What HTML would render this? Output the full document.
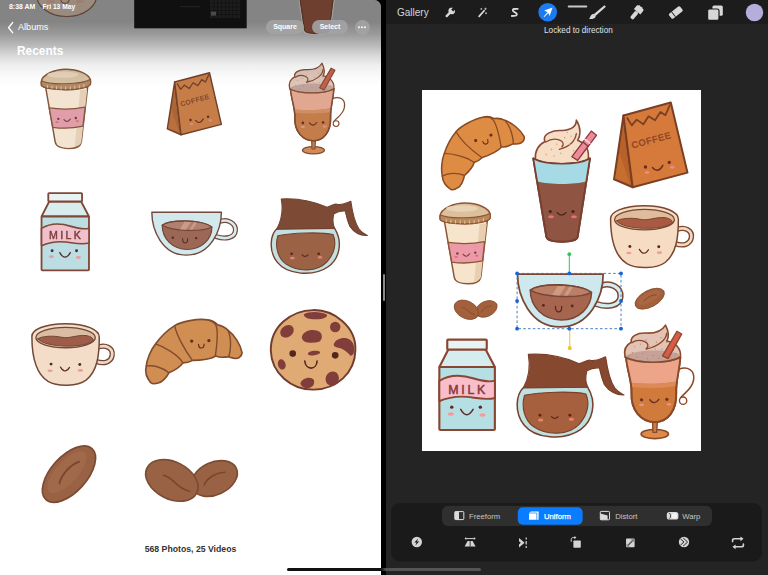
<!DOCTYPE html>
<html><head><meta charset="utf-8">
<style>
html,body{margin:0;padding:0;background:#000;}
body{width:768px;height:575px;overflow:hidden;position:relative;font-family:"Liberation Sans",sans-serif;}
#left{position:absolute;left:0;top:0;width:381px;height:575px;background:#fff;border-top-right-radius:7px;overflow:hidden;}
#grad{position:absolute;left:0;top:0;width:381px;height:100px;background:linear-gradient(to bottom,rgba(0,0,0,.482) 0px,rgba(0,0,0,.482) 22px,rgba(0,0,0,.395) 34px,rgba(0,0,0,.265) 46px,rgba(0,0,0,.145) 56px,rgba(0,0,0,.058) 66px,rgba(0,0,0,.014) 78px,rgba(0,0,0,0) 88px);}
#right{position:absolute;left:386px;top:0;width:382px;height:575px;background:#242424;overflow:hidden;}
.t{position:absolute;white-space:nowrap;color:#fff;}
.pill{position:absolute;height:14px;border-radius:7px;background:rgba(163,163,163,0.9);color:#fff;font-weight:bold;font-size:7px;line-height:14px;text-align:center;}
svg{position:absolute;left:0;top:0;}
#lsvg{filter:saturate(0.82);}
#homebar{position:absolute;left:287px;top:568.3px;width:194px;height:2.5px;border-radius:2px;background:linear-gradient(to right,#111 0,#111 94px,#555 99px,#555 100%);}
#divh{position:absolute;left:382.5px;top:274px;width:2.5px;height:27px;border-radius:2px;background:#8a8a8a;}

</style></head><body>
<div id="left">
<svg id="lsvg" width="381" height="575" viewBox="0 0 381 575"><defs><g id="cup" transform="translate(20,55) scale(0.18248)" stroke-linejoin="round" stroke-linecap="round">
<path d="M140,175 L193,478 C198,504 235,513 265,513 C295,513 330,504 336,478 L371,175 Z" fill="#f6e4cc" stroke="#8c5535" stroke-width="8"/>
<path d="M330,190 L300,500 C320,498 333,490 336,478 L368,190 Z" fill="#e8cfb0" stroke="none"/>
<path d="M160,290 Q258,304 357,286 L345,390 Q262,408 180,396 Z" fill="#ec9aa8" stroke="#8c5535" stroke-width="7"/>
<path d="M116,150 C118,105 195,78 250,78 C312,78 384,102 387,143 L386,160 C380,178 305,190 250,190 C195,190 124,182 117,166 Z" fill="#dcc09c" stroke="#8c5535" stroke-width="8"/>
<path d="M117,141 C160,165 340,163 387,133 L386,160 C380,178 305,190 250,190 C195,190 124,182 117,166 Z" fill="#b9895c" stroke="#8c5535" stroke-width="6"/>
<path d="M150,166 V178 M175,170 V182 M200,173 V185 M225,174 V186 M250,175 V187 M275,174 V186 M300,172 V184 M325,168 V180 M350,162 V174" stroke="#e3c096" stroke-width="6" fill="none"/>
<ellipse cx="235" cy="108" rx="85" ry="17" fill="#e8d3b4" stroke="none"/>
<circle cx="210" cy="350" r="6.5" fill="#7a3a3a"/><circle cx="306" cy="345" r="6.5" fill="#7a3a3a"/>
<path d="M241,354 Q258,376 276,351" fill="none" stroke="#7a3a3a" stroke-width="6"/>
<ellipse cx="203" cy="368" rx="9" ry="5" fill="#e06a7a"/><ellipse cx="314" cy="362" rx="9" ry="5" fill="#e06a7a"/>
</g>
<g id="bag" transform="translate(150,55) scale(0.18248)" stroke-linejoin="round" stroke-linecap="round">
<path d="M135,148 L95,405 L170,437 Z" fill="#b8622a" stroke="#7a3f22" stroke-width="8"/>
<path d="M135,148 L326,97 L391,380 L170,437 Z" fill="#d57a3a" stroke="#7a3f22" stroke-width="8"/>
<path d="M118,300 L100,400 L160,425 Z" fill="#c66d30" stroke="none"/>
<path d="M150,158 L168,188 L188,165 L215,184 L236,152 L262,168 L284,135 L304,148 L322,108" fill="none" stroke="#7a3f22" stroke-width="7"/>
<text x="250" y="260" transform="rotate(-15 250 260)" text-anchor="middle" font-family="Liberation Sans, sans-serif" font-size="36" fill="#8a4424" stroke="#8a4424" stroke-width="1.5" letter-spacing="3">COFFEE</text>
<circle cx="222" cy="356" r="7" fill="#6a2f20"/><circle cx="318" cy="338" r="7" fill="#6a2f20"/>
<path d="M250,358 Q272,385 292,350" fill="none" stroke="#6a2f20" stroke-width="6"/>
<ellipse cx="228" cy="378" rx="10" ry="6" fill="#f08a80"/><ellipse cx="330" cy="358" rx="10" ry="6" fill="#f08a80"/>
</g>
<g id="latte" transform="translate(270,55) scale(0.18248)" stroke-linejoin="round" stroke-linecap="round">
<path d="M343,238 C380,225 415,240 408,285 C402,325 370,340 352,362" fill="none" stroke="#8a4a2a" stroke-width="7"/>
<circle cx="362" cy="376" r="16" fill="none" stroke="#8a4a2a" stroke-width="6"/>
<ellipse cx="238" cy="522" rx="60" ry="20" fill="#e08a4a" stroke="#8a4a2a" stroke-width="7"/>
<path d="M228,460 L230,515 L246,515 L250,460 Z" fill="#d07a3c" stroke="#8a4a2a" stroke-width="6"/>
<path d="M112,185 C118,250 138,290 136,340 C132,420 180,470 238,470 C295,470 335,420 332,340 C330,290 345,250 350,185 Z" fill="#d07a3c" stroke="#8a4a2a" stroke-width="8"/>
<path d="M114,195 C120,250 132,275 135,298 C200,305 270,303 333,292 C338,260 345,230 349,195 Z" fill="#eda58a" stroke="none"/>
<path d="M135,298 C200,305 270,303 333,292 L333,312 C270,322 200,322 136,316 Z" fill="#dd8a58" stroke="none"/>
<path d="M112,185 C118,250 138,290 136,340 C132,420 180,470 238,470 C295,470 335,420 332,340 C330,290 345,250 350,185" fill="none" stroke="#8a4a2a" stroke-width="8"/>
<path d="M108,185 C100,150 115,130 135,120 C130,95 160,78 200,80 C240,82 270,70 285,45 C300,75 300,100 290,115 C330,120 355,150 350,185 C300,215 160,215 108,185 Z" fill="#e2c4b6" stroke="#8a4a2a" stroke-width="7"/>
<path d="M110,180 C160,150 300,150 348,175 C345,195 300,212 230,212 C160,212 115,200 110,180 Z" fill="#c6a198" stroke="none"/>
<g fill="#b87a5a"><circle cx="140" cy="165" r="2.6"/><circle cx="160" cy="185" r="2.6"/><circle cx="185" cy="170" r="2.6"/><circle cx="205" cy="192" r="2.6"/><circle cx="230" cy="178" r="2.6"/><circle cx="255" cy="190" r="2.6"/><circle cx="280" cy="175" r="2.6"/><circle cx="310" cy="188" r="2.6"/><circle cx="330" cy="170" r="2.6"/><circle cx="150" cy="140" r="2.6"/><circle cx="175" cy="128" r="2.6"/><circle cx="215" cy="140" r="2.6"/><circle cx="245" cy="120" r="2.6"/><circle cx="265" cy="100" r="2.6"/><circle cx="300" cy="140" r="2.6"/><circle cx="320" cy="155" r="2.6"/><circle cx="200" cy="110" r="2.6"/><circle cx="240" cy="150" r="2.6"/><circle cx="270" cy="150" r="2.6"/><circle cx="125" cy="180" r="2.6"/><circle cx="290" cy="120" r="2.6"/><circle cx="180" cy="200" r="2.6"/><circle cx="300" cy="200" r="2.6"/></g><path d="M138,122 C170,100 230,120 200,150 C250,140 290,110 290,80" fill="none" stroke="#8a4a2a" stroke-width="6"/>
<path d="M272,180 L335,72 L356,84 L296,192 Z" fill="#d85a48" stroke="#8a4a2a" stroke-width="6"/>
<path d="M108,185 C160,215 300,215 350,185" fill="none" stroke="#8a4a2a" stroke-width="7"/>
<circle cx="180" cy="372" r="7" fill="#6a2f20"/><circle cx="291" cy="370" r="7" fill="#6a2f20"/>
<path d="M216,372 Q236,398 256,370" fill="none" stroke="#6a2f20" stroke-width="6"/>
<ellipse cx="180" cy="394" rx="11" ry="6" fill="#f0907a"/><ellipse cx="300" cy="392" rx="11" ry="6" fill="#f0907a"/>
</g>
<g id="milk" transform="translate(20,180) scale(0.18248)" stroke-linejoin="round" stroke-linecap="round">
<path d="M160,118 L335,118 L378,200 L118,200 Z" fill="#d6edef" stroke="#8a4632" stroke-width="10"/>
<rect x="155" y="72" width="185" height="46" rx="4" fill="#e6f4f5" stroke="#8a4632" stroke-width="10"/>
<rect x="118" y="200" width="260" height="295" rx="5" fill="#b6dfe3" stroke="#8a4632" stroke-width="10"/>
<path d="M118,265 C170,232 230,238 280,254 C320,266 350,272 378,264 L378,345 C340,356 300,346 250,340 C190,334 150,346 118,360 Z" fill="#f8bfcb" stroke="#8a4632" stroke-width="9"/>
<text x="253" y="326" text-anchor="middle" font-family="Liberation Sans, sans-serif" font-size="58" fill="#8a3a3a" stroke="#8a3a3a" stroke-width="2.4" letter-spacing="13">MILK</text>
<circle cx="176" cy="388" r="8" fill="#5a2a2a"/><circle cx="310" cy="388" r="8" fill="#5a2a2a"/>
<path d="M218,398 Q246,448 276,398" fill="none" stroke="#5a2a2a" stroke-width="7"/>
<ellipse cx="172" cy="420" rx="14" ry="8" fill="#f59aa0"/><ellipse cx="320" cy="425" rx="14" ry="8" fill="#f59aa0"/>
</g>
<g id="teacup" transform="translate(140,190) scale(0.14793)" stroke-linejoin="round" stroke-linecap="round">
<path d="M535,215 C590,190 650,225 645,275 C640,325 575,335 515,315" fill="none" stroke="#7a4635" stroke-width="34"/>
<path d="M535,215 C590,190 650,225 645,275 C640,325 575,335 515,315" fill="none" stroke="#d3ecf0" stroke-width="18"/>
<path d="M80,150 L550,150 C550,270 480,440 312,440 C150,440 80,270 80,150 Z" fill="#cde9ee" stroke="#7a4635" stroke-width="9.5"/>
<path d="M150,238 C150,330 220,402 320,402 C420,402 486,330 486,250 C400,200 220,195 150,238 Z" fill="#a5654f" stroke="#7a4635" stroke-width="8"/>
<path d="M150,238 C200,200 420,200 486,250 C420,285 220,280 150,238 Z" fill="#bb7e66" stroke="#7a4635" stroke-width="8"/>
<path d="M300,215 L270,265 L310,268 L345,216 Z M365,218 L335,268 L355,268 L385,222 Z" fill="#cf9a84" stroke="none"/>
<circle cx="222" cy="322" r="8" fill="#5a2a22"/><circle cx="380" cy="325" r="8" fill="#5a2a22"/>
<path d="M288,328 C288,368 326,368 322,328" fill="none" stroke="#5a2a22" stroke-width="7"/>
</g>
<g id="pot" transform="translate(260,185) scale(0.17397)" stroke-linejoin="round" stroke-linecap="round">
<path d="M98,250 C55,290 50,385 100,445 C155,515 305,530 392,470 C455,425 480,330 428,248 Z" fill="#bfe0e0" stroke="#7a3f2a" stroke-width="8"/>
<path d="M102,292 C85,350 100,420 150,455 C220,502 330,500 385,442 C432,390 440,330 420,285 C350,268 180,275 102,292 Z" fill="#a6603e" stroke="#7a3f2a" stroke-width="6"/>
<path d="M122,80 C200,75 300,90 385,128 C410,120 430,108 440,110 C470,120 500,100 522,93 C530,150 545,220 570,255 C590,280 610,285 617,290 C580,292 540,272 515,235 C500,200 495,170 490,150 C470,148 450,150 425,165 C415,200 420,230 430,250 L96,254 C125,200 135,150 122,80 Z" fill="#86482e" stroke="#7a3f2a" stroke-width="6"/>
<circle cx="182" cy="395" r="7.5" fill="#5a2418"/><circle cx="337" cy="395" r="7.5" fill="#5a2418"/>
<path d="M242,402 Q258,420 276,402" fill="none" stroke="#5a2418" stroke-width="6"/>
<ellipse cx="186" cy="420" rx="14" ry="8" fill="#ee8068"/><ellipse cx="345" cy="416" rx="14" ry="8" fill="#ee8068"/>
</g>
<g id="mug" transform="translate(20,305) scale(0.16515)" stroke-linejoin="round" stroke-linecap="round">
<path d="M465,258 C520,235 565,262 558,305 C552,345 510,358 462,342" fill="none" stroke="#7a4630" stroke-width="32"/>
<path d="M465,258 C520,235 565,262 558,305 C552,345 510,358 462,342" fill="none" stroke="#f5d8c0" stroke-width="16"/>
<path d="M72,190 C72,150 150,113 275,113 C400,113 480,150 480,195 C480,300 470,400 400,455 C350,492 230,497 170,462 C90,412 72,290 72,190 Z" fill="#f7dcc4" stroke="#7a4630" stroke-width="9"/>
<ellipse cx="276" cy="197" rx="180" ry="62" fill="#dfbc9c" stroke="#7a4630" stroke-width="8"/>
<path d="M108,205 C130,188 200,184 250,195 C300,206 340,180 400,185 C432,190 448,205 442,216 C400,262 150,262 108,205 Z" fill="#a85a42" stroke="#7a4630" stroke-width="6"/>
<circle cx="188" cy="358" r="9" fill="#5a2a22"/><circle cx="362" cy="360" r="9" fill="#5a2a22"/>
<path d="M245,376 Q272,422 300,378" fill="none" stroke="#5a2a22" stroke-width="7"/>
<ellipse cx="182" cy="398" rx="16" ry="8" fill="#f39a92"/><ellipse cx="366" cy="396" rx="16" ry="8" fill="#f39a92"/>
</g>
<g id="croissant" transform="translate(135,305) scale(0.16529)" stroke-linejoin="round" stroke-linecap="round">
<path d="M95,470 C70,440 60,400 68,370 C72,330 95,270 125,235 C150,200 200,150 240,125 C280,100 380,80 440,90 C470,92 490,110 500,120 C530,125 550,140 562,152 C600,180 640,240 648,290 C645,315 620,328 600,322 C590,320 575,318 568,312 C540,318 510,318 488,308 C470,325 400,335 350,335 C330,345 300,350 290,350 C270,380 240,395 205,410 C190,440 160,470 140,472 C120,478 105,478 95,470 Z" fill="#de8c44" stroke="#8a4a25" stroke-width="10"/>
<path d="M240,125 C250,180 300,270 345,332 M440,90 C480,100 495,115 497,160 C500,220 490,280 486,308 M562,152 C585,200 580,270 568,312 M125,235 C170,250 260,300 290,350 M68,370 C110,360 170,380 205,410" fill="none" stroke="#8a4a25" stroke-width="8.5"/>
<circle cx="343" cy="218" r="10" fill="#6a2f18"/><circle cx="447" cy="215" r="10" fill="#6a2f18"/>
<path d="M384,238 C386,268 418,268 418,236" fill="none" stroke="#6a2f18" stroke-width="7"/>
</g>
<g id="cookie" transform="translate(260,300) scale(0.17406)" stroke-linejoin="round" stroke-linecap="round">
<path d="M305,58 C420,55 555,150 548,290 C545,420 440,512 310,515 C180,518 65,420 62,290 C60,150 180,60 305,58 Z" fill="#eaa868" stroke="#7a3a28" stroke-width="11"/>
<g fill="#8c3a36" stroke="none">
<path d="M252,82 C280,65 350,65 385,85 C390,105 340,115 310,110 C280,112 250,100 252,82 Z"/>
<ellipse cx="155" cy="180" rx="42" ry="33" transform="rotate(-35 155 180)"/>
<path d="M240,215 C245,180 290,165 325,175 C360,180 365,225 340,240 C300,250 245,250 240,215 Z"/>
<circle cx="432" cy="155" r="30"/>
<path d="M425,250 C440,215 510,200 535,250 C548,290 540,320 520,320 C500,300 480,280 450,275 C430,270 420,262 425,250 Z"/>
<ellipse cx="310" cy="305" rx="36" ry="13" transform="rotate(-8 310 305)"/>
<ellipse cx="125" cy="370" rx="22" ry="30" transform="rotate(-15 125 370)"/>
<path d="M232,480 C240,450 290,435 310,460 C315,490 300,505 270,508 C250,505 235,495 232,480 Z"/>
<ellipse cx="415" cy="452" rx="38" ry="42" transform="rotate(20 415 452)"/>
</g>
<circle cx="188" cy="308" r="19" fill="#5a241c"/><circle cx="432" cy="318" r="19" fill="#5a241c"/>
<path d="M257,350 C262,405 325,405 328,350" fill="none" stroke="#5a241c" stroke-width="9"/>
</g>
<g id="bean" transform="translate(20,430) scale(0.15649)" stroke-linejoin="round" stroke-linecap="round">
<ellipse cx="313" cy="282" rx="220" ry="114" transform="rotate(-48 313 282)" fill="#a3603c" stroke="#84492c" stroke-width="11"/>
<ellipse cx="300" cy="270" rx="170" ry="70" transform="rotate(-48 300 270)" fill="#aa6741" stroke="none"/>
<path d="M252,342 C262,290 320,222 378,202" fill="none" stroke="#7e4429" stroke-width="11"/>
</g>
<g id="beans2" transform="translate(135,440) scale(0.14975)" stroke-linejoin="round" stroke-linecap="round">
<ellipse cx="530" cy="257" rx="162" ry="108" transform="rotate(-25 530 257)" fill="#a3603c" stroke="#84492c" stroke-width="11"/>
<path d="M462,300 C482,250 548,215 600,215" fill="none" stroke="#7e4429" stroke-width="10"/>
<ellipse cx="246" cy="270" rx="186" ry="124" transform="rotate(27 246 270)" fill="#a3603c" stroke="#84492c" stroke-width="11"/>
<path d="M190,235 C260,250 270,320 365,343" fill="none" stroke="#7e4429" stroke-width="10"/>
</g>
<g id="frappe" transform="translate(515,105) scale(0.2611)" stroke-linejoin="round" stroke-linecap="round">
<path d="M218,198 L292,100 L312,116 L240,212 Z" fill="#ee8a9a" stroke="#8a3a3a" stroke-width="5"/>
<path d="M232,180 L250,195 M250,156 L268,170 M268,132 L286,146" stroke="#fbd0d6" stroke-width="7" fill="none"/>
<path d="M78,210 C75,170 95,150 115,140 C100,110 150,95 180,98 C215,95 235,80 235,58 C255,90 250,120 240,135 C275,150 285,180 280,210 C240,238 120,238 78,210 Z" fill="#f6ddc6" stroke="#8a4a35" stroke-width="6"/>
<path d="M118,142 C150,120 200,135 180,160 M235,110 C230,140 210,160 170,170" fill="none" stroke="#8a4a35" stroke-width="5"/>
<g fill="#e0a070"><circle cx="140" cy="170" r="3"/><circle cx="160" cy="150" r="3"/><circle cx="190" cy="125" r="3"/><circle cx="210" cy="150" r="3"/><circle cx="225" cy="175" r="3"/><circle cx="175" cy="185" r="3"/><circle cx="120" cy="190" r="3"/><circle cx="200" cy="105" r="3"/><circle cx="245" cy="190" r="3"/><circle cx="150" cy="195" r="3"/><circle cx="215" cy="120" r="3"/></g>
<path d="M218,198 L260,142 L280,158 L240,212 Z" fill="#ee8a9a" stroke="#8a3a3a" stroke-width="5"/>
<path d="M70,205 L120,505 C125,530 235,530 240,505 L287,205 C240,232 120,232 70,205 Z" fill="#8f5442" stroke="#7a3f2e" stroke-width="7"/>
<path d="M71,206 C120,232 240,232 286,206 L273,292 C230,306 130,306 85,292 Z" fill="#a6dbe6" stroke="none"/>
<path d="M70,205 L120,505 C125,530 235,530 240,505 L287,205" fill="none" stroke="#7a3f2e" stroke-width="7"/>
<path d="M70,205 C120,232 240,232 287,205" fill="none" stroke="#7a3f2e" stroke-width="6"/>
<circle cx="135" cy="408" r="6" fill="#4a2018"/><circle cx="222" cy="408" r="6" fill="#4a2018"/>
<path d="M162,412 Q178,432 195,412" fill="none" stroke="#4a2018" stroke-width="5"/>
<ellipse cx="138" cy="428" rx="11" ry="6" fill="#e8707a"/><ellipse cx="226" cy="428" rx="11" ry="6" fill="#e8707a"/>
</g>
</defs><use href="#cup"/><use href="#bag"/><use href="#latte"/><use href="#milk"/><use href="#teacup"/><use href="#pot"/><use href="#mug"/><use href="#croissant"/><use href="#cookie"/><use href="#bean"/><use href="#beans2"/></svg>
<div id="grad"></div>
<svg width="381" height="40" viewBox="0 0 381 40">
<ellipse cx="66.7" cy="-5" rx="30" ry="21.5" fill="#9b8b7d" stroke="#5c4538" stroke-width="1.2"/>
<ellipse cx="65" cy="0" rx="4" ry="3.4" fill="none" stroke="#6a4840" stroke-width="1.3"/>
<ellipse cx="51" cy="1.5" rx="4" ry="1.3" fill="#a07a70"/><ellipse cx="80" cy="1.5" rx="4" ry="1.3" fill="#a07a70"/>
<rect x="134.2" y="-2" width="112.5" height="30.3" fill="#101010"/>
<rect x="210" y="-2" width="30" height="20" fill="#1d1d1d"/>
<rect x="213.75" y="-2" width="0.6" height="20" fill="#101010"/><rect x="217.50" y="-2" width="0.6" height="20" fill="#101010"/><rect x="221.25" y="-2" width="0.6" height="20" fill="#101010"/><rect x="225.00" y="-2" width="0.6" height="20" fill="#101010"/><rect x="228.75" y="-2" width="0.6" height="20" fill="#101010"/><rect x="232.50" y="-2" width="0.6" height="20" fill="#101010"/><rect x="236.25" y="-2" width="0.6" height="20" fill="#101010"/><rect x="210" y="2.75" width="30" height="0.6" fill="#101010"/><rect x="210" y="6.50" width="30" height="0.6" fill="#101010"/><rect x="210" y="10.25" width="30" height="0.6" fill="#101010"/><rect x="210" y="14.00" width="30" height="0.6" fill="#101010"/><rect x="211" y="11.6" width="5" height="4" fill="#4a4a4a"/>
<rect x="180" y="6.2" width="20" height="1" fill="#262626"/>
<path d="M298.4,-2 L303.2,31.5 C303.8,36.4 330,36.4 330.6,31.5 L335,-2 Z" fill="#a9a4a2" stroke="none"/>
<path d="M299.8,-2 L304.6,30.6 C305,34.6 328.6,34.6 329.2,30.6 L333.4,-2 Z" fill="#6e3e2e" stroke="#4e281c" stroke-width="1"/>
</svg>
<div class="t" style="left:9px;top:3.4px;font-size:6.9px;font-weight:bold;">8:38 AM</div>
<div class="t" style="left:42.5px;top:3.4px;font-size:6.7px;font-weight:bold;">Fri 13 May</div>
<svg width="20" height="20" style="left:5px;top:18px"><path d="M7.6,4.6 L3.6,9.6 L7.6,14.6" fill="none" stroke="#fff" stroke-width="1.5" stroke-linecap="round" stroke-linejoin="round"/></svg>
<div class="t" style="left:18px;top:22.3px;font-size:9.1px;">Albums</div>
<div class="t" style="left:17px;top:43.5px;font-size:11.9px;font-weight:bold;">Recents</div>
<div class="pill" style="left:266px;top:20px;width:38px;">Square</div>
<div class="pill" style="left:312px;top:20px;width:36px;">Select</div>
<div class="pill" style="left:354.5px;top:19.5px;width:15px;height:15px;border-radius:8px;"></div>
<svg width="20" height="20" style="left:352px;top:17px"><circle cx="7" cy="10.2" r="0.95" fill="#fff"/><circle cx="10" cy="10.2" r="0.95" fill="#fff"/><circle cx="13" cy="10.2" r="0.95" fill="#fff"/></svg>
<div class="t" style="left:0;width:381px;text-align:center;top:543.6px;font-size:8.7px;font-weight:bold;color:#333;">568 Photos, 25 Videos</div>

</div>
<div id="right">
<svg id="rsvg" width="382" height="575" viewBox="386 0 382 575">
<rect x="422" y="90" width="279" height="361" fill="#fff"/>
<use href="#cup" transform="translate(464.800,243.300) rotate(0) scale(1.0177) translate(-65.600,-108.800)"/><use href="#bag" transform="matrix(1.3616,-0.0106,0.0106,1.3616,384.794,5.706)"/><use href="#croissant" transform="matrix(0.8938,-0.2884,0.2884,0.8938,206.012,-108.998)"/><use href="#mug" transform="translate(651.400,236.750) rotate(0) scale(1.0059) translate(-72.450,-354.550)"/><use href="#beans2" transform="translate(475.850,309.800) rotate(0) scale(0.4681) translate(-191.900,-480.450)"/><use href="#bean" transform="translate(649.8,298.5) rotate(20) scale(0.465) translate(-69,-473.8)"/><use href="#milk" transform="translate(467.100,384.800) rotate(0) scale(1.1703) translate(-65.250,-231.700)"/><use href="#pot" transform="translate(570.450,395.900) rotate(0) scale(1.1105) translate(-319.150,-236.300)"/><use href="#latte" transform="translate(659.750,382.200) rotate(0) scale(1.2515) translate(-317.400,-108.850)"/><use href="#teacup" transform="translate(569.900,300.500) rotate(0) scale(1.2322) translate(-194.350,-233.650)"/><use href="#frappe"/>
<!-- selection box -->
<g fill="none">
<line x1="569.3" y1="255" x2="569.3" y2="273.4" stroke="#2fc457" stroke-width="1"/>
<line x1="569.8" y1="328.7" x2="569.8" y2="347" stroke="#f2c230" stroke-width="1"/>
<rect x="517.1" y="273.4" width="103.9" height="55.3" stroke="#3a6fb8" stroke-width="0.9" stroke-dasharray="2.6 2.2"/>
</g>
<g fill="#1565d8">
<circle cx="517.1" cy="273.4" r="1.9"/><circle cx="569.3" cy="273.4" r="1.9"/><circle cx="621" cy="273.4" r="1.9"/>
<circle cx="517.1" cy="301" r="1.9"/><circle cx="621" cy="301" r="1.9"/>
<circle cx="517.1" cy="328.7" r="1.9"/><circle cx="569.3" cy="328.7" r="1.9"/><circle cx="621" cy="328.7" r="1.9"/>
</g>
<circle cx="569.3" cy="254.2" r="1.9" fill="#2fc457"/>
<rect x="568" y="346.3" width="3.6" height="3.6" rx="0.8" fill="#f2c230"/>
<!-- top toolbar -->
<rect x="386" y="0" width="382" height="23.7" fill="#1c1c1c"/>
<text x="397" y="16" font-family="Liberation Sans, sans-serif" font-size="10" fill="#d6d6d6">Gallery</text>
<text x="578.4" y="32.6" text-anchor="middle" font-family="Liberation Sans, sans-serif" font-size="8.2" fill="#e0e0e0">Locked to direction</text>
<!-- wrench -->
<g transform="translate(450,12.7) rotate(45) scale(0.9)" fill="#d8d8d8">
<rect x="-1.3" y="-2" width="2.6" height="8.5" rx="1.2"/>
<path d="M-3.6,-3.5 A3.8,3.8 0 1 0 3.6,-3.5 L1.6,-5.8 L1.6,-3 L-1.6,-3 L-1.6,-5.8 Z" transform="translate(0,-0.5)"/>
</g>
<!-- wand -->
<g transform="translate(482.5,12.5) scale(0.8)" stroke="#d8d8d8" stroke-linecap="round" fill="none">
<line x1="-4.2" y1="4.8" x2="2" y2="-2.2" stroke-width="2.2"/>
<path d="M3.8,-5.6 L3.8,-3.6 M2.8,-4.6 L4.8,-4.6 M-1.5,-5 L-1.5,-3.8 M-2.1,-4.4 L-0.9,-4.4 M4.4,0.2 L4.4,1.6 M3.7,0.9 L5.1,0.9" stroke-width="0.9"/>
</g>
<!-- S -->
<path transform="translate(515,12.4) scale(0.78) translate(-515,-12.2)" d="M518.5,7.6 L513.6,7.8 C512.2,8 511.8,9.6 512.8,10.6 L516.6,13.2 C517.8,14.2 517.4,16.2 515.8,16.4 L511,16.8" fill="none" stroke="#d8d8d8" stroke-width="2.4" stroke-linecap="round" stroke-linejoin="round"/>
<!-- arrow active -->
<circle cx="547.7" cy="12.2" r="9.3" fill="#1d7bf2"/>
<path d="M552.6,7.4 L544.2,10.6 L547.5,12.3 L543.6,16.4 L544.3,17 L548.3,13 L549.6,16 Z" fill="#fff"/>
<!-- line + brush -->
<rect x="567.7" y="5.4" width="19.6" height="2" rx="1" fill="#c8c8c8"/>
<path d="M604.4,5.2 L605.9,6.7 L595.2,16.2 L593.4,14.4 Z" fill="#d8d8d8"/>
<path d="M593.2,13.8 L595.8,16.4 C594.6,19 591,19.4 589,18.8 C590.6,17.6 590.4,14.6 593.2,13.8 Z" fill="#d8d8d8"/>
<!-- smudge -->
<g transform="translate(636.5,12.5) rotate(40)" fill="#d8d8d8">
<rect x="-2" y="-1" width="4" height="9" rx="1.5"/>
<path d="M-4.2,-1 L4.2,-1 L4.2,-5 C4.2,-6.5 3,-7.5 2.2,-6.8 C1.4,-8 0,-8 -0.6,-7 C-1.6,-8 -3,-7.6 -3.2,-6.4 C-4,-6.4 -4.4,-5.6 -4.2,-4.6 Z"/>
</g>
<!-- eraser -->
<g transform="translate(675.8,12.5) rotate(-38)" fill="#d8d8d8">
<rect x="-7" y="-3.2" width="14" height="6.4" rx="1.4"/>
<rect x="-3.4" y="-3.2" width="0.9" height="6.4" fill="#1c1c1c"/>
</g>
<!-- layers -->
<rect x="712.4" y="5.4" width="10.4" height="10.4" rx="1.6" fill="#d8d8d8"/>
<rect x="707.6" y="9" width="11.4" height="11.4" rx="1.8" fill="#d8d8d8" stroke="#1c1c1c" stroke-width="1.2"/>
<circle cx="754.5" cy="12.5" r="8.7" fill="#b5aeda"/>
<!-- bottom panel -->
<rect x="391" y="503" width="371" height="58.5" rx="9" fill="#1a1a1a"/>
<rect x="442" y="505.8" width="270" height="20.2" rx="6" fill="#2f2f2f"/>
<rect x="517.8" y="507.2" width="64.8" height="17.6" rx="5" fill="#0a7cff"/>
<g font-family="Liberation Sans, sans-serif" font-size="7.7" fill="#c6c6c6">
<text x="469" y="518.6">Freeform</text>
<text x="544" y="518.6" fill="#fff" stroke="#fff" stroke-width="0.25">Uniform</text>
<text x="615.2" y="518.6">Distort</text>
<text x="682.3" y="518.6">Warp</text>
</g>
<!-- seg icons -->
<g>
<rect x="454.8" y="511.6" width="9" height="8" rx="0.8" fill="none" stroke="#dcdcdc" stroke-width="1"/>
<rect x="454.8" y="511.6" width="4.2" height="8" fill="#dcdcdc"/>
<path d="M529,513 L531,511.4 L538.6,511.4 L538.6,519.8 L529,519.8 Z" fill="#fff"/>
<path d="M529,513 L536.8,513 L536.8,519.8" fill="none" stroke="#0a7cff" stroke-width="0.7"/>
<rect x="600.3" y="511.4" width="9.2" height="8.4" rx="0.8" fill="none" stroke="#dcdcdc" stroke-width="1"/>
<path d="M600.3,513.4 L607.6,515.4 L607.6,519.8 L600.3,519.8 Z" fill="#dcdcdc"/>
<rect x="666.8" y="512" width="11.6" height="7.6" rx="2.6" fill="#dcdcdc"/>
<path d="M669.4,513 C671,514.6 671,517 669.4,518.6" fill="none" stroke="#1a1a1a" stroke-width="0.8"/>
<rect x="672" y="513.2" width="5" height="5.2" rx="1.6" fill="#f4f4f4"/>
</g>
<!-- bottom icons -->
<g fill="#d4d4d4">
<circle cx="416.8" cy="542" r="5.2"/>
<path d="M418.2,538.4 L414.4,542.6 L416.6,542.6 L415.4,545.6 L419.2,541.4 L417,541.4 Z" fill="#1a1a1a"/>
<!-- perspective -->
<path d="M467.6,541 L472.6,541 L475.6,546.6 L464.6,546.6 Z"/>
<path d="M466.4,538.6 L473.8,538.6" stroke="#d4d4d4" stroke-width="1" fill="none"/>
<circle cx="465.8" cy="538.6" r="1"/><circle cx="474.4" cy="538.6" r="1"/>
<path d="M470.1,541 L470.1,546.6" stroke="#1a1a1a" stroke-width="0.8"/>
<!-- flip -->
<path d="M519,538 L524.6,542.8 L519,547.6 Z"/>
<path d="M526.2,537.6 V539.4 M526.2,541 V544.4 M526.2,546 V548" stroke="#d4d4d4" stroke-width="1.2" fill="none"/>
<path d="M519,541.2 L520.8,542.8 L519,544.4 Z" fill="#1a1a1a"/>
<!-- rotate -->
<rect x="573.4" y="540.4" width="7.4" height="7.4" rx="0.8"/>
<path d="M571.2,541.8 L571.2,539.4 C571.2,538.2 572,537.6 573.2,537.6 L575,537.6" fill="none" stroke="#d4d4d4" stroke-width="1"/>
<path d="M574.4,536 L576.4,537.6 L574.4,539.2 Z"/>
<!-- fit -->
<rect x="626" y="538.6" width="8.6" height="8.6" rx="0.8"/>
<path d="M627.4,546 L633.2,540" stroke="#555" stroke-width="1.3"/>
<path d="M626.4,546.8 L626.4,543.4 L629.8,546.8 Z M634.2,539 L634.2,542.4 L630.8,539 Z" fill="#8a8a8a"/>
<!-- ball -->
<circle cx="684" cy="542" r="5.2"/>
<path d="M680.4,538.8 L684,542 L680.4,545.2 M683.2,538 L687.6,542 L683.2,546" fill="none" stroke="#1a1a1a" stroke-width="0.9"/>
<!-- reset -->
<path d="M732.6,541.6 L732.6,540.4 C732.6,539.4 733.4,538.8 734.4,538.8 L741,538.8 M743.4,544 L743.4,545.2 C743.4,546.2 742.6,546.8 741.6,546.8 L735,546.8" fill="none" stroke="#d4d4d4" stroke-width="1.6" stroke-linecap="round"/>
<path d="M740.4,536.4 L743.6,538.8 L740.4,541.2 Z M735.6,544.4 L732.4,546.8 L735.6,549.2 Z"/>
</g>

</svg>

</div>
<div id="homebar"></div>
<div id="divh"></div>
</body></html>
